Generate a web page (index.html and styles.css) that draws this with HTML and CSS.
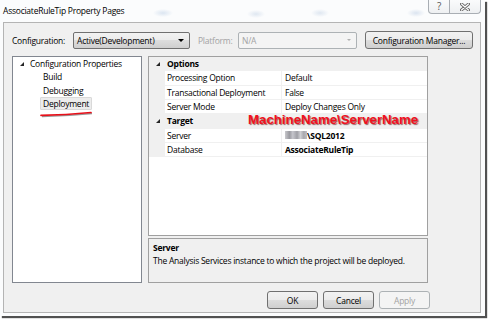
FILE: index.html
```html
<!DOCTYPE html>
<html>
<head>
<meta charset="utf-8">
<link rel="stylesheet" href="styles.css">
</head>
<body>
<div class="window">
  <div class="titlebar">
    <span class="title">AssociateRuleTip Property Pages</span>
    <div class="caption">
      <span class="cb help">?</span>
      <span class="cb close"><svg width="10" height="8" viewBox="0 0 10 8"><path d="M1.5 1 L8.5 7 M8.5 1 L1.5 7" stroke="#6a6a6a" stroke-width="3" stroke-linecap="round"/><path d="M1.5 1 L8.5 7 M8.5 1 L1.5 7" stroke="#fff" stroke-width="1.2" stroke-linecap="round"/></svg></span>
    </div>
  </div>
  <div class="client">
    <div class="toprow">
      <span class="lbl cfg">Configuration:</span>
      <div class="combo active"><span>Active(Development)</span><span class="arrow"></span></div>
      <span class="lbl plat">Platform:</span>
      <div class="combo disabled"><span>N/A</span><span class="arrow"></span></div>
      <button class="btn cfgmgr">Configuration Manager...</button>
    </div>
    <div class="main">
      <div class="tree">
        <div class="node root"><span class="tri"></span><span>Configuration Properties</span></div>
        <div class="node child">Build</div>
        <div class="node child">Debugging</div>
        <div class="node childsel"><span class="sel">Deployment</span></div>
      </div>
      <div class="right">
        <div class="grid">
          <div class="row hdr"><span class="gut"><span class="tri"></span></span><span class="hname">Options</span></div>
          <div class="row"><span class="gut"></span><span class="name">Processing Option</span><span class="val">Default</span></div>
          <div class="row"><span class="gut"></span><span class="name">Transactional Deployment</span><span class="val">False</span></div>
          <div class="row"><span class="gut"></span><span class="name">Server Mode</span><span class="val">Deploy Changes Only</span></div>
          <div class="row hdr"><span class="gut"><span class="tri"></span></span><span class="hname">Target</span></div>
          <div class="row"><span class="gut"></span><span class="name">Server</span><span class="val bold"><span class="blur"></span>\SQL2012</span></div>
          <div class="row"><span class="gut"></span><span class="name">Database</span><span class="val bold">AssociateRuleTip</span></div>
        </div>
        <div class="desc">
          <div class="dtitle">Server</div>
          <div class="dtext">The Analysis Services instance to which the project will be deployed.</div>
        </div>
      </div>
    </div>
    <div class="buttons">
      <button class="btn dlg">OK</button>
      <button class="btn dlg">Cancel</button>
      <button class="btn dlg off">Apply</button>
    </div>
  </div>
</div>
<div class="annot-text">MachineName\ServerName</div>
<svg class="annot-line" width="489" height="326" viewBox="0 0 489 326">
  <path d="M42 116.5 Q 66 116 92 113.5" stroke="#999" stroke-width="1.6" fill="none"/>
  <path d="M41 115.3 Q 66 115 91 112.5" stroke="#e8101a" stroke-width="1.7" fill="none" stroke-linecap="round"/>
</svg>
</body>
</html>
```

FILE: styles.css
```css
body {
  margin: 0;
  background: #fff;
  font-family: "Open Sans", "Noto Sans", sans-serif;
  font-size: 8.5px;
  letter-spacing: -0.24px;
  color: #000;
  position: relative;
  width: 489px;
  height: 326px;
  overflow: hidden;
}

.window {
  width: 485px;
  height: 316px;
  box-sizing: border-box;
  background:
    radial-gradient(ellipse 10px 4px at 163px 13px, #dbe5f1, rgba(255,255,255,0)),
    radial-gradient(ellipse 9px 4px at 256px 14px, #dfe7f1, rgba(255,255,255,0)),
    radial-gradient(ellipse 9px 4px at 320px 13px, #dfe7f1, rgba(255,255,255,0)),
    radial-gradient(ellipse 9px 4px at 416px 13px, #dbe4f0, rgba(255,255,255,0)),
    #fbfcfd;
  box-shadow: 2px 2px 1px rgba(50,50,50,0.85);
  display: flex;
  flex-direction: column;
}

.titlebar {
  height: 22px;
  display: flex;
  justify-content: space-between;
  align-items: flex-start;
}

.title {
  padding-left: 3px;
  line-height: 22px;
}

.caption {
  margin-right: 4px;
  display: flex;
  height: 14px;
  box-sizing: border-box;
  border: 1px solid #a9aeb4;
  border-top: none;
  border-radius: 0 0 4px 4px;
  overflow: hidden;
  background: linear-gradient(#fafbfc, #eef0f2);
}

.cb {
  display: flex;
  align-items: center;
  justify-content: center;
  height: 13px;
}

.help {
  width: 20px;
  border-right: 1px solid #a9aeb4;
  color: #555;
  font-size: 10px;
  line-height: 13px;
  text-shadow: 0 0 1px #fff;
}

.close {
  width: 30px;
}

.client {
  margin-left: 3px;
  width: 478px;
  height: 291px;
  box-sizing: border-box;
  border: 1px solid #b4b4b4;
  background: #f0f0f0;
  padding: 8px 0 0 8px;
}

.toprow {
  display: flex;
  align-items: center;
  height: 18px;
}

.lbl.cfg {
  width: 61px;
}

.lbl.plat {
  width: 40px;
  margin-left: 8px;
  color: #a3a3a3;
}

.combo {
  height: 17px;
  box-sizing: border-box;
  border-radius: 2px;
  display: flex;
  align-items: center;
  justify-content: space-between;
  padding: 0 5px 0 3px;
}

.combo.active {
  width: 117px;
  border: 1px solid #707070;
  background: linear-gradient(#f2f2f2, #ebebeb 50%, #dddddd 50%, #cfcfcf);
}

.combo.disabled {
  width: 119px;
  border: 1px solid #adb2b5;
  background: #f4f4f4;
  color: #a3a3a3;
}

.arrow {
  width: 0;
  height: 0;
  border-left: 3px solid transparent;
  border-right: 3px solid transparent;
  border-top: 3px solid #000;
}

.combo.disabled .arrow {
  border-top-color: #b0b0b0;
  border-left-width: 2px;
  border-right-width: 2px;
  border-top-width: 2px;
}

.btn {
  height: 18px;
  box-sizing: border-box;
  border: 1px solid #707070;
  border-radius: 3px;
  background: linear-gradient(#f2f2f2, #ebebeb 50%, #dddddd 50%, #cfcfcf);
  font: inherit;
  letter-spacing: inherit;
  color: #000;
  padding: 0;
}

.cfgmgr {
  margin-left: 8px;
  width: 108px;
}

.main {
  display: flex;
  gap: 6px;
  margin-top: 7px;
  height: 227px;
  width: 416px;
}

.tree {
  width: 130px;
  box-sizing: border-box;
  border: 1px solid #828790;
  background: #fff;
}

.node {
  height: 13.33px;
  line-height: 13.33px;
  white-space: nowrap;
}

.root {
  display: flex;
  align-items: center;
}

.tri {
  display: inline-block;
  width: 0;
  height: 0;
  border-left: 4px solid transparent;
  border-bottom: 4px solid #262626;
}

.root .tri {
  margin-left: 7px;
  margin-right: 6px;
}

.child {
  padding-left: 30px;
}

.childsel {
  padding-left: 27px;
}

.sel {
  display: inline-block;
  height: 13.33px;
  box-sizing: border-box;
  line-height: 11.33px;
  border: 1px solid #d9d9d9;
  background: #ececec;
  padding: 0 2px;
  border-radius: 1px;
}

.right {
  width: 280px;
  display: flex;
  flex-direction: column;
}

.grid {
  height: 180px;
  box-sizing: border-box;
  border: 1px solid #a0a0a0;
  background: #fff;
}

.row {
  display: flex;
  height: 14.33px;
  line-height: 13.33px;
  white-space: nowrap;
}

.gut {
  width: 16px;
  background: #f0f0f0;
  display: flex;
  align-items: center;
  justify-content: center;
}

.hdr {
  background: #f0f0f0;
  font-weight: bold;
}

.hdr .gut .tri {
  margin-left: 1px;
}

.hname {
  padding-left: 2px;
}

.name {
  width: 117px;
  box-sizing: border-box;
  padding-left: 2px;
  border-right: 1px solid #f0f0f0;
  border-bottom: 1px solid #f0f0f0;
  overflow: hidden;
}

.val {
  flex: 1;
  padding-left: 3px;
  border-bottom: 1px solid #f0f0f0;
  display: flex;
  align-items: center;
}

.bold {
  font-weight: bold;
}

.blur {
  display: inline-block;
  width: 22px;
  height: 8px;
  background: linear-gradient(90deg, #c8c8cc, #9a9aa0 20%, #c6c6cc 35%, #a0a0a6 55%, #d0d0d4 70%, #a8a8ae 85%, #c0c0c4);
  filter: blur(0.6px);
}

.desc {
  margin-top: 2px;
  height: 45px;
  box-sizing: border-box;
  border: 1px solid #a0a0a0;
  background: #f0f0f0;
  padding: 2px 4px;
}

.dtitle {
  font-weight: bold;
  line-height: 13px;
}

.dtext {
  line-height: 13px;
}

.buttons {
  margin-top: 8px;
  width: 418px;
  display: flex;
  justify-content: flex-end;
  gap: 5px;
}

.dlg {
  width: 51px;
}

.dlg.off {
  border-color: #adb2b5;
  background: #f4f4f4;
  color: #a3a3a3;
}

.annot-text {
  position: absolute;
  left: 248px;
  top: 112px;
  font-family: "Liberation Sans", Arial, sans-serif;
  font-weight: bold;
  font-size: 13.25px;
  letter-spacing: 0;
  line-height: 15px;
  color: #f01020;
  text-shadow: 1px 1px 1px rgba(90, 0, 0, 0.6);
  white-space: nowrap;
}

.annot-line {
  position: absolute;
  left: 0;
  top: 0;
  pointer-events: none;
}
```
